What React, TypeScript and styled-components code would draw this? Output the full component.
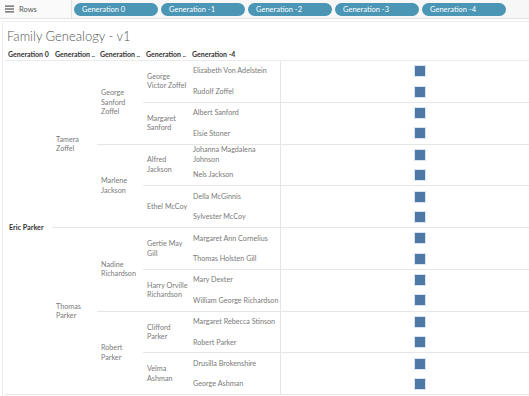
import React from 'react'
import styled, { createGlobalStyle } from 'styled-components'

const GlobalStyle = createGlobalStyle`
  html, body {
    margin: 0;
    padding: 0;
    background: #ffffff;
    font-family: Lato, "Open Sans", "Liberation Sans", sans-serif;
  }
`

type Person = { name: string; parents?: Person[]; bold?: boolean }

const tree: Person = {
  name: 'Eric Parker',
  bold: true,
  parents: [
    {
      name: 'Tamera Zoffel',
      parents: [
        {
          name: 'George Sanford Zoffel',
          parents: [
            { name: 'George Victor Zoffel', parents: [{ name: 'Elizabeth Von Adelstein' }, { name: 'Rudolf Zoffel' }] },
            { name: 'Margaret Sanford', parents: [{ name: 'Albert Sanford' }, { name: 'Elsie Stoner' }] },
          ],
        },
        {
          name: 'Marlene Jackson',
          parents: [
            { name: 'Alfred Jackson', parents: [{ name: 'Johanna Magdalena Johnson' }, { name: 'Nels Jackson' }] },
            { name: 'Ethel McCoy', parents: [{ name: 'Della McGinnis' }, { name: 'Sylvester McCoy' }] },
          ],
        },
      ],
    },
    {
      name: 'Thomas Parker',
      parents: [
        {
          name: 'Nadine Richardson',
          parents: [
            { name: 'Gertie May Gill', parents: [{ name: 'Margaret Ann Cornelius' }, { name: 'Thomas Holsten Gill' }] },
            { name: 'Harry Orville Richardson', parents: [{ name: 'Mary Dexter' }, { name: 'William George Richardson' }] },
          ],
        },
        {
          name: 'Robert Parker',
          parents: [
            { name: 'Clifford Parker', parents: [{ name: 'Margaret Rebecca Stinson' }, { name: 'Robert Parker' }] },
            { name: 'Velma Ashman', parents: [{ name: 'Drusilla Brokenshire' }, { name: 'George Ashman' }] },
          ],
        },
      ],
    },
  ],
}

const colWidths = [47, 45, 46, 46]
const pills = ['Generation 0', 'Generation -1', 'Generation -2', 'Generation -3', 'Generation -4']
const headers = ['Generation 0', 'Generation ..', 'Generation ..', 'Generation ..', 'Generation -4']

const Page = styled.div`
  width: 529px;
  height: 396px;
  overflow: hidden;
  background: #ffffff;
`

const Shelf = styled.div`
  display: flex;
  align-items: center;
  height: 18px;
  background: #f7f7f7;
  border-bottom: 1px solid #e2e2e2;
`

const ShelfLabel = styled.div`
  display: flex;
  align-items: center;
  gap: 5px;
  width: 66px;
  height: 100%;
  padding-left: 5px;
  border-right: 1px solid #e2e2e2;
  background: #fafafa;
  font-size: 7.5px;
  color: #555;
`

const Pills = styled.div`
  display: flex;
  gap: 3px;
  padding-left: 2px;
`

const Pill = styled.div`
  width: 84px;
  height: 13px;
  box-sizing: border-box;
  padding-left: 8px;
  border-radius: 7px;
  background: #4a96b4;
  color: #ffffff;
  font-size: 7.5px;
  line-height: 13px;
`

const Sheet = styled.div`
  margin-top: 2px;
  margin-left: 2px;
  border-left: 1px solid #ececec;
  border-top: 1px solid #ececec;
  height: 380px;
`

const Title = styled.div`
  box-sizing: border-box;
  padding: 5px 0 0 4px;
  height: 26px;
  font-size: 13px;
  line-height: 18px;
  color: #555;
  font-weight: 300;
`

const HeaderRow = styled.div`
  display: flex;
  align-items: center;
  height: 12px;
  margin-left: 2px;
  border-bottom: 1px solid #ebebeb;
`

const HeaderCell = styled.div<{ $w?: number }>`
  width: ${(p) => (p.$w ? `${p.$w}px` : 'auto')};
  padding-left: 3px;
  box-sizing: border-box;
  font-size: 7px;
  font-weight: 700;
  color: #333;
  white-space: nowrap;
`

const Table = styled.div`
  margin-left: 2px;
  border-bottom: 1px solid #e6e6e6;
`

const Group = styled.div<{ $last: boolean }>`
  display: flex;
  border-bottom: ${(p) => (p.$last ? 'none' : '1px solid #e6e6e6')};
`

const Label = styled.div<{ $w: number; $bold?: boolean }>`
  flex: none;
  display: flex;
  align-items: center;
  width: ${(p) => p.$w}px;
  box-sizing: border-box;
  padding: 0 1px 0 4px;
  font-size: 7.2px;
  line-height: 9.5px;
  font-weight: ${(p) => (p.$bold ? 700 : 400)};
  color: ${(p) => (p.$bold ? '#333' : '#7a7a7a')};
`

const Branches = styled.div`
  flex: 1;
  display: flex;
  flex-direction: column;
`

const Leaf = styled.div`
  display: flex;
  height: 20.4px;
`

const LeafName = styled.div`
  flex: none;
  display: flex;
  align-items: center;
  width: 92px;
  box-sizing: border-box;
  padding: 0 1px 0 4px;
  font-size: 7.2px;
  line-height: 9.5px;
  color: #7a7a7a;
  border-right: 1px solid #e6e6e6;
`

const DataCell = styled.div`
  flex: 1;
  display: flex;
  align-items: center;
  padding-left: 134px;
`

const Mark = styled.div`
  width: 10px;
  height: 10px;
  background: #4e79a7;
  box-shadow: 0 0 0 1px #d9e4f0;
`

function MenuIcon() {
  return (
    <svg width="9" height="8" viewBox="0 0 9 8">
      <rect x="0" y="0.5" width="9" height="1.2" fill="#555" />
      <rect x="0" y="3.4" width="9" height="1.2" fill="#555" />
      <rect x="0" y="6.3" width="9" height="1.2" fill="#555" />
    </svg>
  )
}

function Node({ person, depth }: { person: Person; depth: number }) {
  if (!person.parents) {
    return (
      <Leaf>
        <LeafName>{person.name}</LeafName>
        <DataCell>
          <Mark />
        </DataCell>
      </Leaf>
    )
  }
  return (
    <>
      <Label $w={colWidths[depth]} $bold={person.bold}>
        {person.name}
      </Label>
      <Branches>
        {person.parents.map((p, i) =>
          p.parents ? (
            <Group key={i} $last={i === person.parents!.length - 1}>
              <Node person={p} depth={depth + 1} />
            </Group>
          ) : (
            <Node key={i} person={p} depth={depth + 1} />
          )
        )}
      </Branches>
    </>
  )
}

export default function App() {
  return (
    <Page>
      <GlobalStyle />
      <Shelf>
        <ShelfLabel>
          <MenuIcon />
          Rows
        </ShelfLabel>
        <Pills>
          {pills.map((p) => (
            <Pill key={p}>{p}</Pill>
          ))}
        </Pills>
      </Shelf>
      <Sheet>
        <Title>Family Genealogy - v1</Title>
        <HeaderRow>
          {headers.map((h, i) => (
            <HeaderCell key={i} $w={colWidths[i]}>
              {h}
            </HeaderCell>
          ))}
        </HeaderRow>
        <Table>
          <Group $last>
            <Node person={tree} depth={0} />
          </Group>
        </Table>
      </Sheet>
    </Page>
  )
}
